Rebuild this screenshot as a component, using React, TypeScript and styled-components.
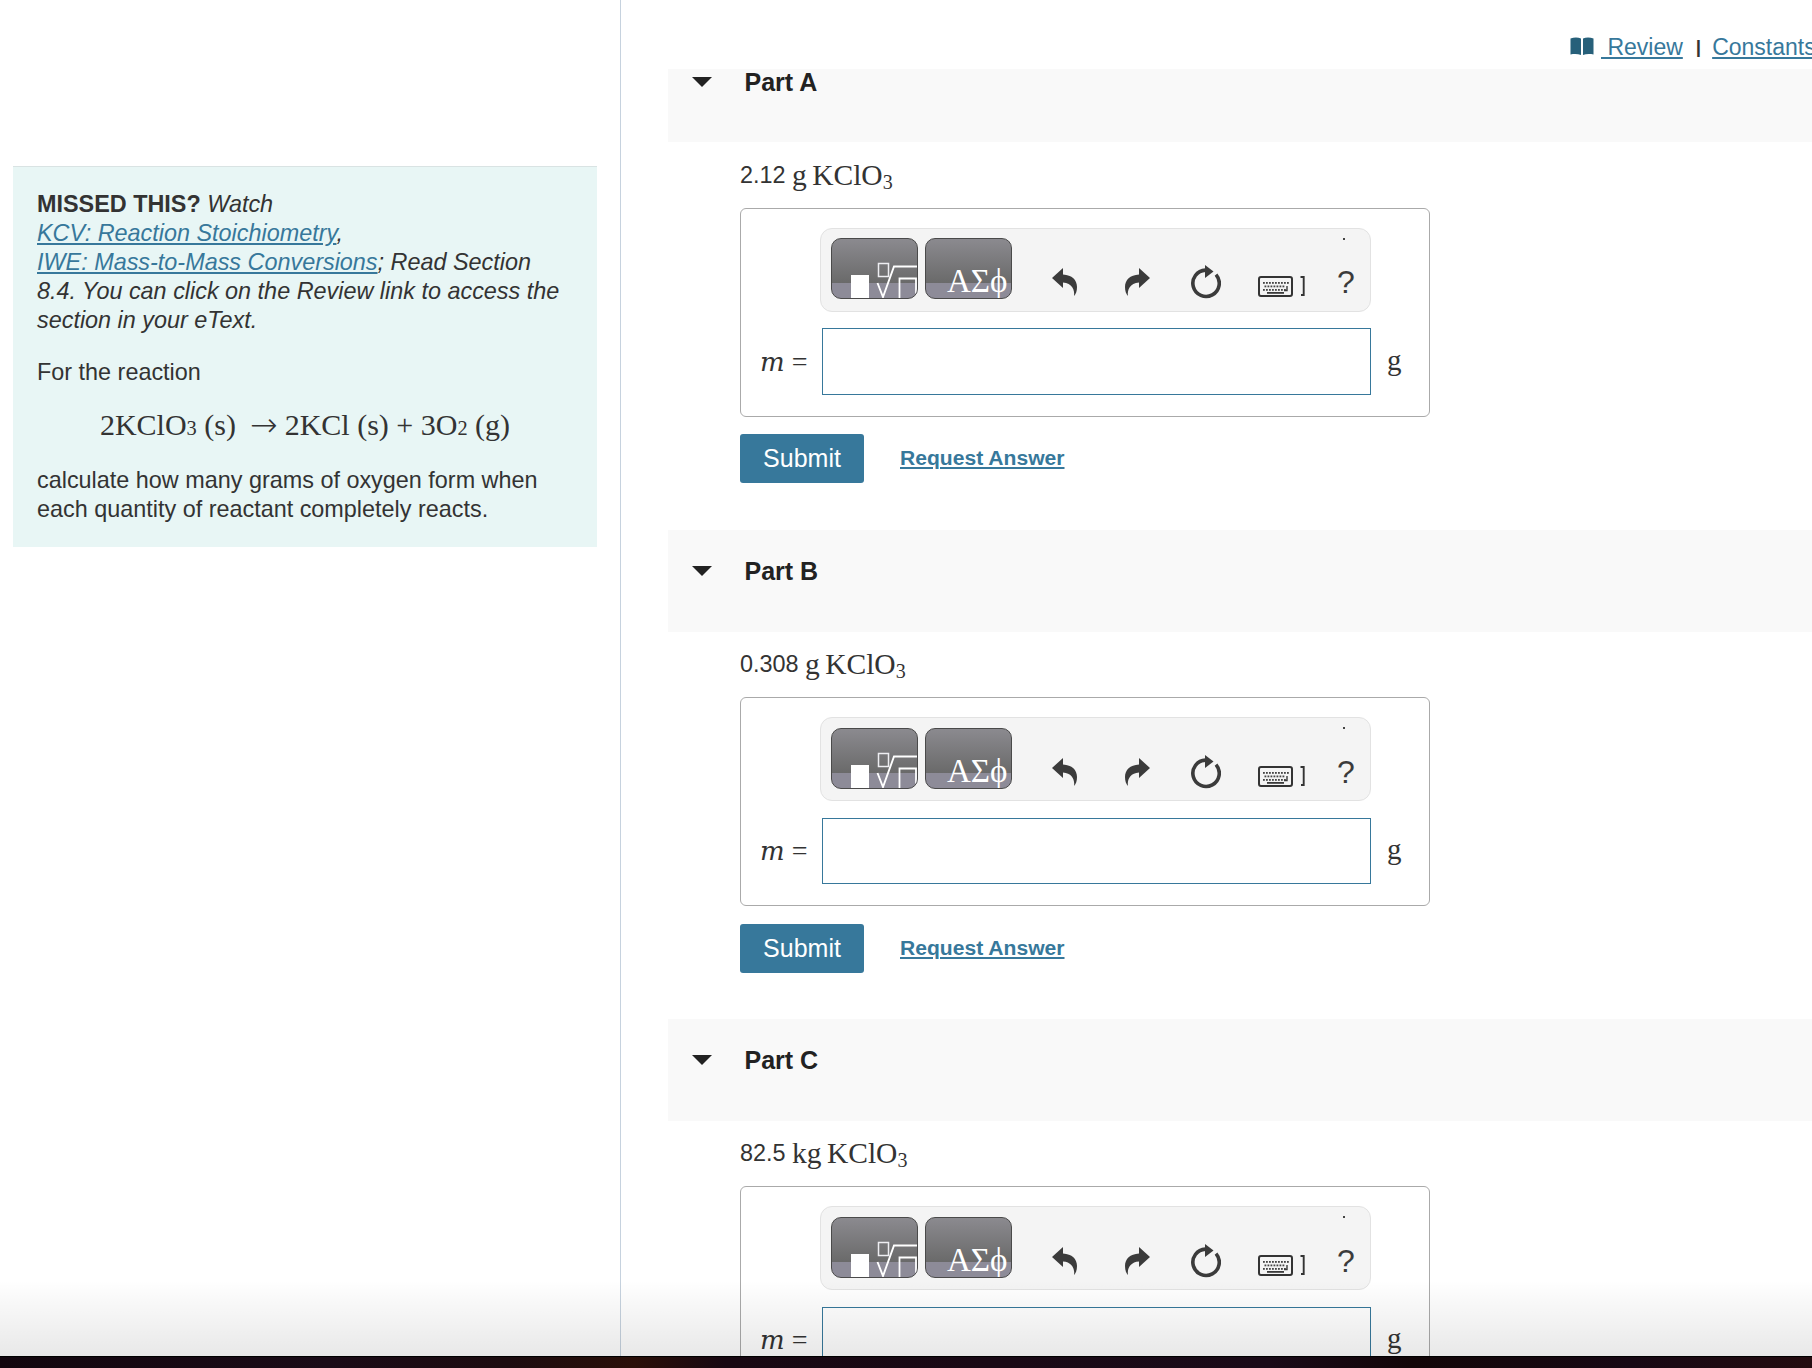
import React from "react";
import styled, { createGlobalStyle } from "styled-components";

const Global = createGlobalStyle`
  html, body { margin: 0; padding: 0; background: #fff; overflow: hidden; }
  * { box-sizing: border-box; }
`;

const SANS = `"Liberation Sans", Arial, sans-serif`;
const SERIF = `"Liberation Serif", "Times New Roman", serif`;
const BLUE = "#37789b";

const Page = styled.div`
  width: 1812px;
  height: 1368px;
  display: flex;
  flex-direction: column;
  overflow: hidden;
  font-family: ${SANS};
  color: #333;
`;
const Main = styled.main`
  position: relative;
  flex: 1;
  min-height: 0;
  display: flex;
  overflow: hidden;
`;
const Fade = styled.div`
  position: absolute;
  left: 0;
  right: 0;
  bottom: 0;
  height: 76px;
  background: linear-gradient(rgba(0, 0, 0, 0), rgba(0, 0, 0, 0.09));
  pointer-events: none;
`;
const DesktopBar = styled.div`
  height: 12px;
  flex: none;
  border-top: 1px solid #000;
  background: linear-gradient(
    90deg,
    #12060e 0%,
    #1a0b17 18%,
    #1c0c10 28%,
    #2a0f08 35%,
    #180812 40%,
    #1a0a18 70%,
    #120608 78%,
    #170814 90%,
    #240c10 100%
  );
`;
const LeftColumn = styled.aside`
  width: 621px;
  flex: none;
  border-right: 1px solid #c6d2de;
  padding: 166px 23px 0 13px;
`;
const InfoPanel = styled.section`
  background: #e8f6f5;
  border-top: 1px solid #d9e3e3;
  padding: 23px 24px 23px;
  font-size: 23.4px;
  line-height: 29px;
`;
const InfoNote = styled.p`
  margin: 0 0 23px;
  font-style: italic;
`;
const InfoLead = styled.b`
  font-style: normal;
`;
const InfoText = styled.p`
  margin: 0;
`;
const InfoLink = styled.a`
  color: ${BLUE};
  text-decoration: underline;
`;
const Equation = styled.div`
  height: 79px;
  padding-bottom: 5px;
  display: flex;
  align-items: center;
  justify-content: center;
  font-family: ${SERIF};
  font-size: 30px;
  white-space: pre;
  color: #333;
`;
const Arrow = styled.span`
  font-family: "DejaVu Sans", sans-serif;
  font-weight: 200;
  font-size: 33px;
  line-height: 1;
  margin: 0 7px 0 14px;
`;
const Sub = styled.span`
  font-size: 0.68em;
  position: relative;
  top: 0.2em;
`;

const RightColumn = styled.div`
  flex: 1;
  min-width: 0;
  overflow: hidden;
`;
const TopLinks = styled.nav`
  height: 69px;
  padding: 35px 0 0 949px;
  display: flex;
  white-space: nowrap;
  font-size: 23px;
  line-height: 24px;
`;
const BookIcon = styled.svg`
  width: 24px;
  height: 19px;
  flex: none;
  margin: 2px 7px 0 0;
`;
const TopLink = styled.a`
  color: ${BLUE};
  text-decoration: underline;
`;
const TopSep = styled.span`
  margin: 0 11px 0 13px;
  font-size: 19px;
  font-weight: 700;
  color: #333;
`;

const Part = styled.section`
  margin-left: 47px;
`;
const Band = styled.header<{ $first?: boolean }>`
  height: ${(p) => (p.$first ? 73 : 102)}px;
  background: #f9f9f9;
  display: flex;
  align-items: flex-start;
  padding: ${(p) => (p.$first ? 0 : 28)}px 0 0 24px;
`;
const Caret = styled.span`
  width: 0;
  height: 0;
  margin-top: 8px;
  border-left: 10px solid transparent;
  border-right: 10px solid transparent;
  border-top: 10px solid #222;
`;
const PartTitle = styled.h2`
  margin: 0 0 0 32.5px;
  font-size: 25px;
  line-height: 26px;
  font-weight: 700;
  color: #222;
`;
const PartBody = styled.div<{ $first?: boolean }>`
  padding: 0 0 ${(p) => (p.$first ? 47 : 46)}px 72px;
`;
const Question = styled.div<{ $first?: boolean }>`
  height: ${(p) => (p.$first ? 66 : 65)}px;
  display: flex;
  align-items: center;
  font-size: 23.4px;
  white-space: pre;
`;
const MathText = styled.span`
  font-family: ${SERIF};
  font-size: 29.5px;
  word-spacing: -2px;
`;
const AnswerBox = styled.div<{ $first?: boolean }>`
  width: 690px;
  height: 209px;
  border: 1px solid #aaa;
  border-radius: 6px;
  padding: 19px 0 0 0;
  margin-bottom: ${(p) => (p.$first ? 17 : 18)}px;
`;
const Toolbar = styled.div<{ $first?: boolean }>`
  position: relative;
  margin-left: 79px;
  width: 551px;
  height: 84px;
  border: 1px solid #e2e2e2;
  border-radius: 12px;
  background: #f4f4f4;
  padding: ${(p) => (p.$first ? 9 : 10)}px 0 0 10px;
  display: flex;
  align-items: flex-start;
  gap: 7px;
`;
const PaletteButton = styled.div`
  position: relative;
  width: 87px;
  height: 61px;
  flex: none;
  border: 1px solid #4a4a4a;
  border-radius: 10px;
  overflow: hidden;
  background: linear-gradient(#8b8a8f 0%, #6a6a6a 74%, #8d8b98 74.5%, #8d8b98 100%);
`;
const PaletteArt = styled.svg`
  display: block;
  width: 85px;
  height: 59px;
`;
const GreekLabel = styled.span`
  position: absolute;
  left: 21px;
  top: 24px;
  font-family: ${SERIF};
  font-size: 33px;
  line-height: 36px;
  color: #fff;
  white-space: nowrap;
`;
const Tools = styled.div`
  height: 61px;
  display: flex;
  align-items: flex-end;
`;
const ToolIcon = styled.svg<{ $left: number; $lift: number }>`
  display: block;
  flex: none;
  margin-left: ${(p) => p.$left}px;
  margin-bottom: ${(p) => p.$lift}px;
`;
const HelpMark = styled.span`
  margin-left: 32px;
  margin-bottom: -1px;
  font-family: ${SANS};
  font-size: 32px;
  line-height: 36px;
  color: #3b3b3b;
`;
const TinyDot = styled.span`
  position: absolute;
  right: 25px;
  top: 9px;
  width: 2px;
  height: 2px;
  background: #444;
`;
const InputRow = styled.div<{ $first?: boolean }>`
  display: flex;
  align-items: center;
  margin-top: ${(p) => (p.$first ? 16 : 17)}px;
  padding-left: 19px;
`;
const VarLabel = styled.label`
  width: 62px;
  flex: none;
  font-family: ${SERIF};
  font-size: 28px;
  white-space: pre;
`;
const VarName = styled.i`
  font-family: "DejaVu Serif", serif;
  font-size: 26px;
`;
const AnswerInput = styled.input<{ $first?: boolean }>`
  width: 549px;
  height: ${(p) => (p.$first ? 67 : 66)}px;
  border: 1px solid ${BLUE};
  border-radius: 0;
  background: #fff;
  outline: none;
  flex: none;
`;
const Unit = styled.span`
  margin: 0 0 3px 16px;
  font-family: ${SERIF};
  font-size: 29px;
`;
const Actions = styled.div`
  display: flex;
  align-items: center;
  gap: 36px;
`;
const SubmitButton = styled.button`
  width: 124px;
  height: 49px;
  border: 0;
  border-radius: 3px;
  background: ${BLUE};
  color: #fff;
  font-family: ${SANS};
  font-size: 25px;
`;
const RequestLink = styled.a`
  padding-bottom: 2px;
  color: ${BLUE};
  font-size: 21.1px;
  font-weight: 700;
  text-decoration: underline;
`;

const UndoPath = "M0 10 L11 0 V6.5 C20 7 25 12 25 19 C25 23 24 26 22 28 C23 22 20 15 11 14.5 V20 Z";

function Undo({ left, flip }: { left: number; flip?: boolean }) {
  return (
    <ToolIcon $left={left} $lift={3} width="25" height="28" viewBox="0 0 25 28">
      <path d={UndoPath} fill="#3b3b3b" transform={flip ? "translate(25 0) scale(-1 1)" : undefined} />
    </ToolIcon>
  );
}

function Refresh() {
  return (
    <ToolIcon $left={41} $lift={0} width="30" height="34" viewBox="0 0 30 34">
      <path d="M14.5 5.1 A13.2 13.2 0 1 0 25 9.6" fill="none" stroke="#3b3b3b" strokeWidth="3.6" />
      <path d="M14 0 L22.5 6.5 L14 13 Z" fill="#3b3b3b" />
    </ToolIcon>
  );
}

function Keyboard() {
  const rows = [
    { y: 6, xs: [5, 8, 11, 14, 17, 20, 23, 26, 29] },
    { y: 9.5, xs: [6.5, 9.5, 12.5, 15.5, 18.5, 21.5, 24.5] },
    { y: 13, xs: [5, 8, 11, 14, 17, 20, 23, 26] },
  ];
  return (
    <ToolIcon $left={37} $lift={2} width="35" height="21" viewBox="0 0 35 21">
      <rect x="1" y="1" width="33" height="19" rx="2" fill="none" stroke="#333" strokeWidth="2" />
      {rows.map((r) =>
        r.xs.map((x) => <rect key={`${r.y}-${x}`} x={x} y={r.y} width="1.8" height="1.8" fill="#444" />)
      )}
      <path d="M29 10 V14.5 H26" fill="none" stroke="#3b3b3b" strokeWidth="1.4" />
      <rect x="9" y="16" width="17" height="1.8" fill="#3b3b3b" />
    </ToolIcon>
  );
}

function Bracket() {
  return (
    <ToolIcon $left={7} $lift={3} width="5" height="20" viewBox="0 0 5 20">
      <path d="M0.5 1 H3.7 V19 H1" fill="none" stroke="#333" strokeWidth="1.9" />
    </ToolIcon>
  );
}

function TemplateArt() {
  return (
    <PaletteArt viewBox="0 0 85 59">
      <rect x="19" y="36" width="18" height="23" fill="#fff" />
      <rect x="46.5" y="24.5" width="10" height="13" fill="none" stroke="#eeeef2" strokeWidth="1.5" />
      <path d="M45.5 44 L51 58 L62 27.5 H85" fill="none" stroke="#fff" strokeWidth="1.9" />
      <path d="M67.5 59 V39.5 H84 V59" fill="none" stroke="#fff" strokeWidth="1.8" />
    </PaletteArt>
  );
}

type PartProps = { letter: string; amount: string; first?: boolean };

function QuestionPart({ letter, amount, first }: PartProps) {
  const [num, unit] = amount.split(" ");
  return (
    <Part>
      <Band $first={first}>
        <Caret />
        <PartTitle>Part {letter}</PartTitle>
      </Band>
      <PartBody $first={first}>
        <Question $first={first}>
          {num}{" "}
          <MathText>
            {unit} KClO<Sub>3</Sub>
          </MathText>
        </Question>
        <AnswerBox $first={first}>
          <Toolbar $first={first}>
            <PaletteButton>
              <TemplateArt />
            </PaletteButton>
            <PaletteButton>
              <GreekLabel>ΑΣϕ</GreekLabel>
            </PaletteButton>
            <Tools>
              <Undo left={33} />
              <Undo left={48} flip />
              <Refresh />
              <Keyboard />
              <Bracket />
              <HelpMark>?</HelpMark>
            </Tools>
            <TinyDot />
          </Toolbar>
          <InputRow $first={first}>
            <VarLabel>
              <VarName>m</VarName> =
            </VarLabel>
            <AnswerInput $first={first} type="text" />
            <Unit>g</Unit>
          </InputRow>
        </AnswerBox>
        <Actions>
          <SubmitButton>Submit</SubmitButton>
          <RequestLink href="#">Request Answer</RequestLink>
        </Actions>
      </PartBody>
    </Part>
  );
}

export default function App() {
  return (
    <Page>
      <Global />
      <Main>
        <LeftColumn>
          <InfoPanel>
            <InfoNote>
              <InfoLead>MISSED THIS?</InfoLead> Watch
              <br />
              <InfoLink href="#">KCV: Reaction Stoichiometry</InfoLink>,
              <br />
              <InfoLink href="#">IWE: Mass-to-Mass Conversions</InfoLink>; Read Section
              <br />
              8.4. You can click on the Review link to access the
              <br />
              section in your eText.
            </InfoNote>
            <InfoText>For the reaction</InfoText>
            <Equation>
              2KClO<Sub>3</Sub> (s)
              <Arrow>→</Arrow>
              2KCl (s) + 3O<Sub>2</Sub> (g)
            </Equation>
            <InfoText>
              calculate how many grams of oxygen form when each quantity of reactant completely reacts.
            </InfoText>
          </InfoPanel>
        </LeftColumn>
        <RightColumn>
          <TopLinks>
            <BookIcon viewBox="0 0 24 19">
              <path d="M0.5 1.5 C4 0 8 0 11 1.5 V18 C8 16.8 4 16.8 0.5 17.5 Z" fill="#27607a" />
              <path d="M23.5 1.5 C20 0 16 0 13 1.5 V18 C16 16.8 20 16.8 23.5 17.5 Z" fill="#27607a" />
            </BookIcon>
            <TopLink href="#">&nbsp;Review</TopLink>
            <TopSep>|</TopSep>
            <TopLink href="#">Constants</TopLink>
          </TopLinks>
          <QuestionPart letter="A" amount="2.12 g" first />
          <QuestionPart letter="B" amount="0.308 g" />
          <QuestionPart letter="C" amount="82.5 kg" />
        </RightColumn>
        <Fade />
      </Main>
      <DesktopBar />
    </Page>
  );
}
